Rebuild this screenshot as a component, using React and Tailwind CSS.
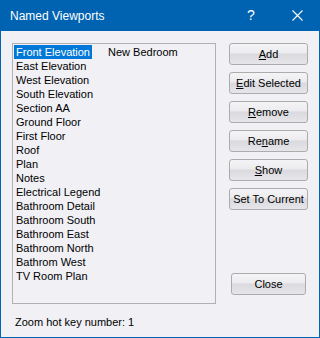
const views = [
  'Front Elevation',
  'East Elevation',
  'West Elevation',
  'South Elevation',
  'Section AA',
  'Ground Floor',
  'First Floor',
  'Roof',
  'Plan',
  'Notes',
  'Electrical Legend',
  'Bathroom Detail',
  'Bathroom South',
  'Bathroom East',
  'Bathroom North',
  'Bathrom West',
  'TV Room Plan',
]

function Btn({ children, className = '' }) {
  return (
    <button
      className={`h-[22px] rounded-[3px] border border-[#acacac] bg-[linear-gradient(#f4f4f6_0%,#ececef_45%,#d9d9de_50%,#e6e6ea_100%)] text-[11px] leading-none text-black ${className}`}
    >
      {children}
    </button>
  )
}

export default function App() {
  return (
    <div className="w-[320px] h-[338px] flex flex-col font-['Liberation_Sans',Arial,sans-serif] select-none">
      {/* title bar */}
      <div className="h-[31px] bg-[#0063b1] flex items-center text-white">
        <span className="pl-[10px] text-[12px] flex-1">Named Viewports</span>
        <span className="w-[46px] text-center text-[14px]">?</span>
        <span className="w-[46px] flex justify-center">
          <svg width="11" height="11" viewBox="0 0 11 11">
            <path d="M0.5 0.5L10.5 10.5M10.5 0.5L0.5 10.5" stroke="white" strokeWidth="1.1" />
          </svg>
        </span>
      </div>

      <div className="flex-1 bg-[#f0f0f5] border-x border-b border-[#0063b1] flex flex-col">
        <div className="flex pt-[12px] pl-[11px]">
          {/* listbox */}
          <div className="w-[204px] h-[261px] border border-[#b0b0b5] p-px flex text-[11px] leading-[14px] text-black">
            <div className="w-[92px] flex flex-col items-start">
              {views.map((v, i) => (
                <span
                  key={v}
                  className={i === 0 ? 'bg-[#0078d7] text-white px-[2px]' : 'px-[2px]'}
                >
                  {v}
                </span>
              ))}
            </div>
            <div className="flex flex-col items-start">
              <span className="px-[2px]">New Bedroom</span>
            </div>
          </div>

          {/* buttons */}
          <div className="ml-[13px] w-[79px] flex flex-col">
            <Btn><u>A</u>dd</Btn>
            <Btn className="mt-[7px]"><u>E</u>dit Selected</Btn>
            <Btn className="mt-[7px]"><u>R</u>emove</Btn>
            <Btn className="mt-[7px]">Re<u>n</u>ame</Btn>
            <Btn className="mt-[7px]"><u>S</u>how</Btn>
            <Btn className="mt-[7px]">Set To Current</Btn>
            <Btn className="mt-[63px] w-[75px] self-center">Close</Btn>
          </div>
        </div>

        <div className="pl-[14px] mt-[11px] text-[11px] leading-[14px] text-black">
          Zoom hot key number: 1
        </div>
      </div>
    </div>
  )
}
